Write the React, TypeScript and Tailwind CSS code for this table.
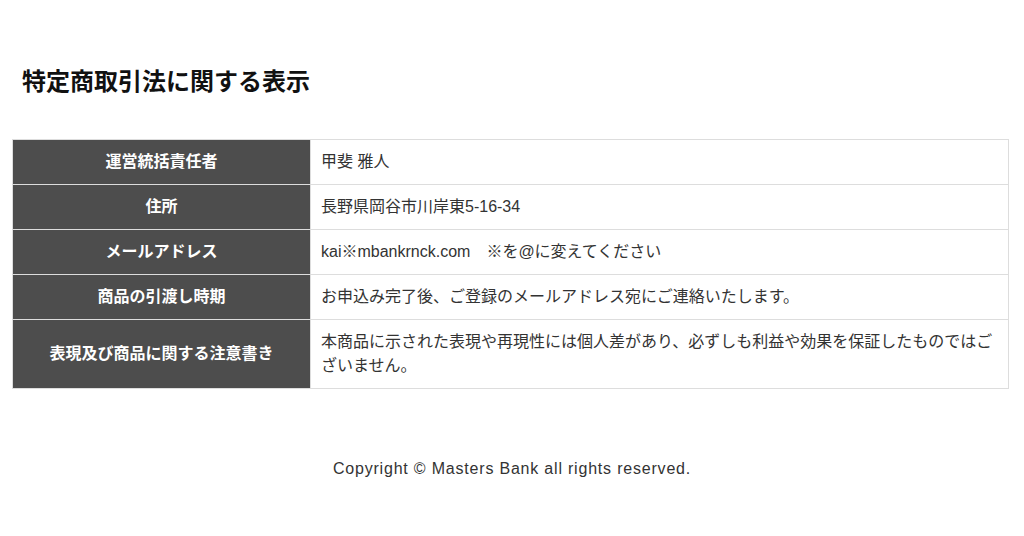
export default function App() {
  const rows = [
    { label: "運営統括責任者", value: "甲斐 雅人" },
    { label: "住所", value: "長野県岡谷市川岸東5-16-34" },
    { label: "メールアドレス", value: "kai※mbankrnck.com\u3000※を@に変えてください" },
    { label: "商品の引渡し時期", value: "お申込み完了後、ご登録のメールアドレス宛にご連絡いたします。" },
    {
      label: "表現及び商品に関する注意書き",
      value: "本商品に示された表現や再現性には個人差があり、必ずしも利益や効果を保証したものではございません。",
    },
  ];

  return (
    <div
      className="w-[1024px] h-[536px] bg-white text-[#222]"
      style={{ fontFamily: '"Liberation Sans", "Noto Sans CJK JP", sans-serif' }}
    >
      <div className="px-3 pt-[65px]">
        <h1 className="pl-[10px] text-[24px] leading-[34px] font-bold text-[#111]">特定商取引法に関する表示</h1>

        <table className="mt-[40px] w-[997px] border-collapse border border-[#ddd]">
          <tbody>
            {rows.map((row) => (
              <tr key={row.label}>
                <th className="w-[298px] bg-[#4d4d4d] border border-[#ddd] px-3 py-[10px] text-center text-[16px] leading-6 font-bold text-white">
                  {row.label}
                </th>
                <td className="border border-[#ddd] px-[10px] py-[10px] text-[16px] leading-6 text-[#333]">
                  {row.value}
                </td>
              </tr>
            ))}
          </tbody>
        </table>

        <p className="mt-[68px] text-center text-[16px] leading-6 tracking-[0.8px] text-[#333]">
          Copyright © Masters Bank all rights reserved.
        </p>
      </div>
    </div>
  );
}
